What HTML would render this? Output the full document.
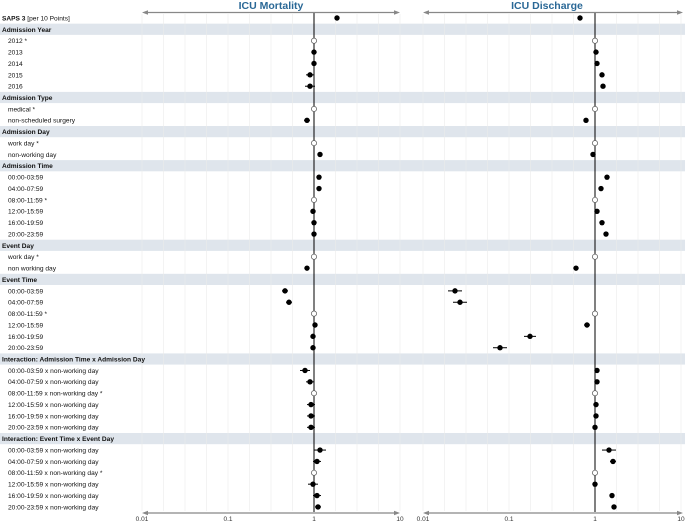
<!DOCTYPE html>
<html><head><meta charset="utf-8"><style>
body{margin:0;background:#fff;}
svg{display:block;font-family:"Liberation Sans",sans-serif;}
</style></head><body>
<svg id="s" width="685" height="522" xmlns="http://www.w3.org/2000/svg"></svg>
<script>
const s=document.getElementById('s');let h='';
const Y=i=>18+i*11.37;
// rows: [label, type(0 hdr,1 item,2 saps), L, Lci, R, Rci] ; null = reference
const rows=[
["SAPS 3",2,337,0,580,0],
["Admission Year",0],
["2012 *",1,null,0,null,0],["2013",1,314,2,596,0],["2014",1,314,2,597,0],["2015",1,310,4,602,0],["2016",1,310,5,603,0],
["Admission Type",0],
["medical *",1,null,0,null,0],["non-scheduled surgery",1,307,3,586,0],
["Admission Day",0],
["work day *",1,null,0,null,0],["non-working day",1,320,0,593,0],
["Admission Time",0],
["00:00-03:59",1,319,0,607,0],["04:00-07:59",1,319,0,601,0],["08:00-11:59 *",1,null,0,null,0],["12:00-15:59",1,313,0,597,0],["16:00-19:59",1,314,0,602,0],["20:00-23:59",1,314,0,606,0],
["Event Day",0],
["work day *",1,null,0,null,0],["non working day",1,307,0,576,0],
["Event Time",0],
["00:00-03:59",1,285,3,455,7],["04:00-07:59",1,289,3,460,7],["08:00-11:59 *",1,null,0,null,0],["12:00-15:59",1,315,0,587,3],["16:00-19:59",1,313,0,530,6],["20:00-23:59",1,313,0,500,7],
["Interaction: Admission Time x Admission Day",0],
["00:00-03:59 x non-working day",1,305,5,597,0],["04:00-07:59 x non-working day",1,310,4,597,0],["08:00-11:59 x non-working day *",1,null,0,null,0],["12:00-15:59 x non-working day",1,311,4,596,0],["16:00-19:59 x non-working day",1,311,4,596,0],["20:00-23:59 x non-working day",1,311,4,595,0],
["Interaction: Event Time x Event Day",0],
["00:00-03:59 x non-working day",1,320,6,609,7],["04:00-07:59 x non-working day",1,317,4,613,3],["08:00-11:59 x non-working day *",1,null,0,null,0],["12:00-15:59 x non-working day",1,313,5,595,0],["16:00-19:59 x non-working day",1,317,4,612,0],["20:00-23:59 x non-working day",1,318,3,614,0]
];
// bands
rows.forEach((r,i)=>{if(r[1]===0)h+=`<rect x="0" y="${Y(i)-5.7}" width="685" height="11.2" fill="#dfe5ec"/>`;});
// grid
[[142,314],[423,595]].forEach(([a,one])=>{for(let k=0;k<=12;k++){const x=a+k*21.5;h+=`<line x1="${x}" y1="14" x2="${x}" y2="511" stroke="#ebebeb" stroke-width="0.6"/>`;}
h+=`<line x1="${one}" y1="13" x2="${one}" y2="512" stroke="#000" stroke-width="1"/>`;});
// arrows
function arr(x1,x2,y){h+=`<line x1="${x1+4}" y1="${y}" x2="${x2-4}" y2="${y}" stroke="#888" stroke-width="1.3"/><path d="M${x1} ${y}l6 -2.2v4.4z M${x2} ${y}l-6 -2.2v4.4z" fill="#888"/>`;}
arr(142,400,12.5);arr(423,683,12.5);arr(142,400,513);arr(423,683,513);
h+=`<text x="271" y="9" text-anchor="middle" font-size="10.5" font-weight="bold" fill="#2a6896">ICU Mortality</text>`;
h+=`<text x="547" y="9" text-anchor="middle" font-size="10.5" font-weight="bold" fill="#2a6896">ICU Discharge</text>`;
[["0.01",142],["0.1",228],["1",314],["10",400]].forEach(([t,x])=>{h+=`<text x="${x}" y="521" text-anchor="middle" font-size="6.5" fill="#333">${t}</text>`;h+=`<text x="${x+281}" y="521" text-anchor="middle" font-size="6.5" fill="#333">${t}</text>`;});
rows.forEach((r,i)=>{const y=Y(i);
 if(r[1]===0){h+=`<text x="2" y="${y+2.4}" font-size="6.6" font-weight="bold" fill="#111">${r[0]}</text>`;return;}
 if(r[1]===2){h+=`<text x="2" y="${y+2.4}" font-size="6.6" fill="#111"><tspan font-weight="bold">SAPS 3</tspan> [per 10 Points]</text>`;}
 else h+=`<text x="8" y="${y+2.4}" font-size="6.6" fill="#111">${r[0]}</text>`;
 [[r[2],r[3],314],[r[4],r[5],595]].forEach(([x,c,one])=>{
  if(x===null){h+=`<circle cx="${one}" cy="${y}" r="2.6" fill="#fff" stroke="#555" stroke-width="0.7"/>`;return;}
  if(c)h+=`<line x1="${x-c}" y1="${y}" x2="${x+c}" y2="${y}" stroke="#000" stroke-width="1"/>`;
  h+=`<circle cx="${x}" cy="${y}" r="2.7" fill="#000"/>`;});
});
s.innerHTML=h;
</script>
</body></html>
